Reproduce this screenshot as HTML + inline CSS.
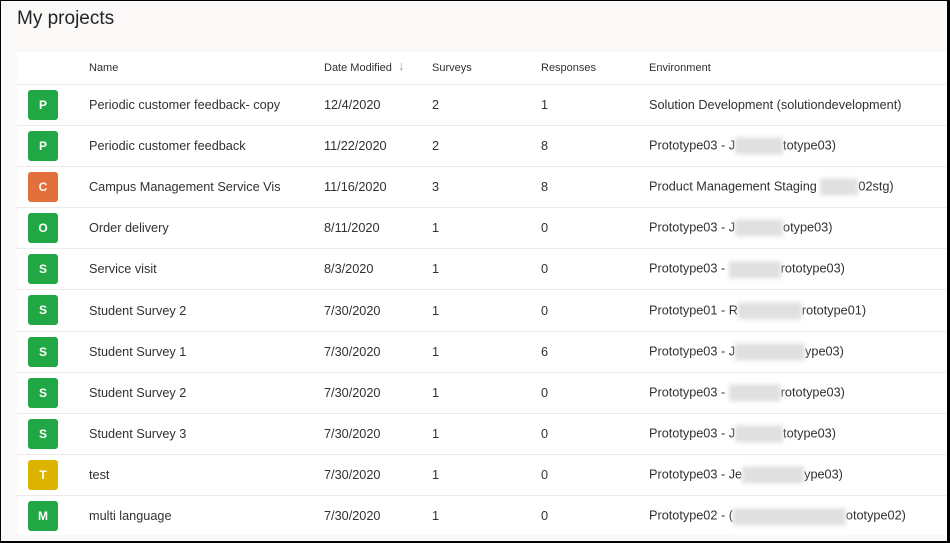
<!DOCTYPE html>
<html><head><style>
*{margin:0;padding:0;box-sizing:border-box}
body{width:950px;height:543px;overflow:hidden;background:#faf9f8;font-family:"Liberation Sans",sans-serif;color:#323130;position:relative}
.frame{position:absolute;left:0;top:0;width:950px;height:543px;border:1px solid #000;border-right:3px solid #000;border-bottom:2px solid #000}
h1{position:absolute;left:17px;top:8px;font-weight:normal;font-size:19px;color:#252423}
.tbl{position:absolute;left:17px;top:52px;width:930px;height:483px;background:#fff}
.hdr{height:33px;border-bottom:1px solid #edebe9;position:relative;font-size:11px}
.row{height:41.1px;border-bottom:1px solid #edebe9;position:relative;font-size:12.7px}
.c{position:absolute;top:50%;transform:translateY(-50%);white-space:nowrap;line-height:16px}
.b{position:absolute;left:11px;top:5px;width:30px;height:30px;border-radius:3px;color:#fff;font-weight:bold;font-size:12px;text-align:center;line-height:30px}
.g{background:#22a745}.o{background:#e3703c}.y{background:#dcb400}
.bl{display:inline-block;background:#e0e0e0;height:17px;vertical-align:middle;filter:blur(2px)}
</style></head><body>
<h1>My projects</h1>
<div class="tbl">
<div class="hdr"><span class="c" style="left:72px">Name</span><span class="c" style="left:307px">Date Modified &nbsp;<span style="color:#a19f9d;font-size:13px;line-height:11px;vertical-align:top">↓</span></span><span class="c" style="left:415px">Surveys</span><span class="c" style="left:524px">Responses</span><span class="c" style="left:632px">Environment</span></div>

<div class="row"><div class="b g">P</div><span class="c" style="left:72px">Periodic customer feedback- copy</span><span class="c" style="left:307px">12/4/2020</span><span class="c" style="left:415px">2</span><span class="c" style="left:524px">1</span><span class="c" style="left:632px">Solution Development (solutiondevelopment)</span></div>
<div class="row"><div class="b g">P</div><span class="c" style="left:72px">Periodic customer feedback</span><span class="c" style="left:307px">11/22/2020</span><span class="c" style="left:415px">2</span><span class="c" style="left:524px">8</span><span class="c" style="left:632px">Prototype03 - J<span class="bl" style="width:48px"></span>totype03)</span></div>
<div class="row"><div class="b o">C</div><span class="c" style="left:72px">Campus Management Service Vis</span><span class="c" style="left:307px">11/16/2020</span><span class="c" style="left:415px">3</span><span class="c" style="left:524px">8</span><span class="c" style="left:632px">Product Management Staging <span class="bl" style="width:38px"></span>02stg)</span></div>
<div class="row"><div class="b g">O</div><span class="c" style="left:72px">Order delivery</span><span class="c" style="left:307px">8/11/2020</span><span class="c" style="left:415px">1</span><span class="c" style="left:524px">0</span><span class="c" style="left:632px">Prototype03 - J<span class="bl" style="width:48px"></span>otype03)</span></div>
<div class="row"><div class="b g">S</div><span class="c" style="left:72px">Service visit</span><span class="c" style="left:307px">8/3/2020</span><span class="c" style="left:415px">1</span><span class="c" style="left:524px">0</span><span class="c" style="left:632px">Prototype03 - <span class="bl" style="width:52px"></span>rototype03)</span></div>
<div class="row"><div class="b g">S</div><span class="c" style="left:72px">Student Survey 2</span><span class="c" style="left:307px">7/30/2020</span><span class="c" style="left:415px">1</span><span class="c" style="left:524px">0</span><span class="c" style="left:632px">Prototype01 - R<span class="bl" style="width:64px"></span>rototype01)</span></div>
<div class="row"><div class="b g">S</div><span class="c" style="left:72px">Student Survey 1</span><span class="c" style="left:307px">7/30/2020</span><span class="c" style="left:415px">1</span><span class="c" style="left:524px">6</span><span class="c" style="left:632px">Prototype03 - J<span class="bl" style="width:70px"></span>ype03)</span></div>
<div class="row"><div class="b g">S</div><span class="c" style="left:72px">Student Survey 2</span><span class="c" style="left:307px">7/30/2020</span><span class="c" style="left:415px">1</span><span class="c" style="left:524px">0</span><span class="c" style="left:632px">Prototype03 - <span class="bl" style="width:52px"></span>rototype03)</span></div>
<div class="row"><div class="b g">S</div><span class="c" style="left:72px">Student Survey 3</span><span class="c" style="left:307px">7/30/2020</span><span class="c" style="left:415px">1</span><span class="c" style="left:524px">0</span><span class="c" style="left:632px">Prototype03 - J<span class="bl" style="width:48px"></span>totype03)</span></div>
<div class="row"><div class="b y">T</div><span class="c" style="left:72px">test</span><span class="c" style="left:307px">7/30/2020</span><span class="c" style="left:415px">1</span><span class="c" style="left:524px">0</span><span class="c" style="left:632px">Prototype03 - Je<span class="bl" style="width:62px"></span>ype03)</span></div>
<div class="row" style="border-bottom:none"><div class="b g">M</div><span class="c" style="left:72px">multi language</span><span class="c" style="left:307px">7/30/2020</span><span class="c" style="left:415px">1</span><span class="c" style="left:524px">0</span><span class="c" style="left:632px">Prototype02 - (<span class="bl" style="width:113px"></span>ototype02)</span></div>
</div>
<div class="frame"></div>
</body></html>
